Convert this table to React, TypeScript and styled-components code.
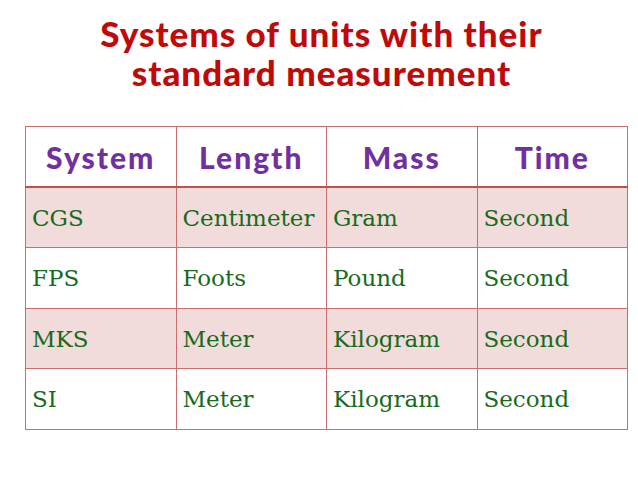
import React from "react";
import styled, { createGlobalStyle } from "styled-components";

const GlobalStyle = createGlobalStyle`
  html, body {
    margin: 0;
    padding: 0;
    background: #ffffff;
  }
`;

const rows = [
  ["CGS", "Centimeter", "Gram", "Second"],
  ["FPS", "Foots", "Pound", "Second"],
  ["MKS", "Meter", "Kilogram", "Second"],
  ["SI", "Meter", "Kilogram", "Second"],
];

const headers = ["System", "Length", "Mass", "Time"];

const Slide = styled.div`
  width: 638px;
  height: 478px;
  display: flex;
  flex-direction: column;
  background: #ffffff;
`;

const Title = styled.h1`
  margin: 14px 0 0 0;
  padding-left: 5px;
  font-family: "Lato", "DejaVu Sans", sans-serif;
  font-weight: 900;
  font-size: 35px;
  line-height: 39px;
  letter-spacing: 1px;
  color: #bf0a0a;
  text-align: center;
`;

const Table = styled.table`
  margin: 34px 0 0 25px;
  width: 603px;
  border-collapse: collapse;
  table-layout: fixed;
`;

const Row = styled.tr<{ $shaded?: boolean }>`
  height: 60.6px;
  background: ${(p) => (p.$shaded ? "#f2dcdb" : "#ffffff")};
`;

const HeadCell = styled.th`
  border: 1px solid #c9706e;
  border-bottom: 2px solid #c0504d;
  padding: 0;
  font-family: "Lato", "DejaVu Sans", sans-serif;
  font-weight: 900;
  font-size: 30px;
  letter-spacing: 2px;
  color: #7030a0;
  text-align: center;
`;

const Cell = styled.td`
  border: 1px solid #c9706e;
  padding: 0 0 0 6px;
  font-family: "DejaVu Serif", Georgia, serif;
  font-size: 23px;
  color: #176b1c;
  white-space: nowrap;
  overflow: hidden;
`;

export default function App() {
  return (
    <>
      <GlobalStyle />
      <Slide>
        <Title>
          Systems of units with their
          <br />
          standard measurement
        </Title>
        <Table>
          <thead>
            <Row>
              {headers.map((h) => (
                <HeadCell key={h}>{h}</HeadCell>
              ))}
            </Row>
          </thead>
          <tbody>
            {rows.map((r, i) => (
              <Row key={i} $shaded={i % 2 === 0}>
                {r.map((c, j) => (
                  <Cell key={j}>{c}</Cell>
                ))}
              </Row>
            ))}
          </tbody>
        </Table>
      </Slide>
    </>
  );
}
